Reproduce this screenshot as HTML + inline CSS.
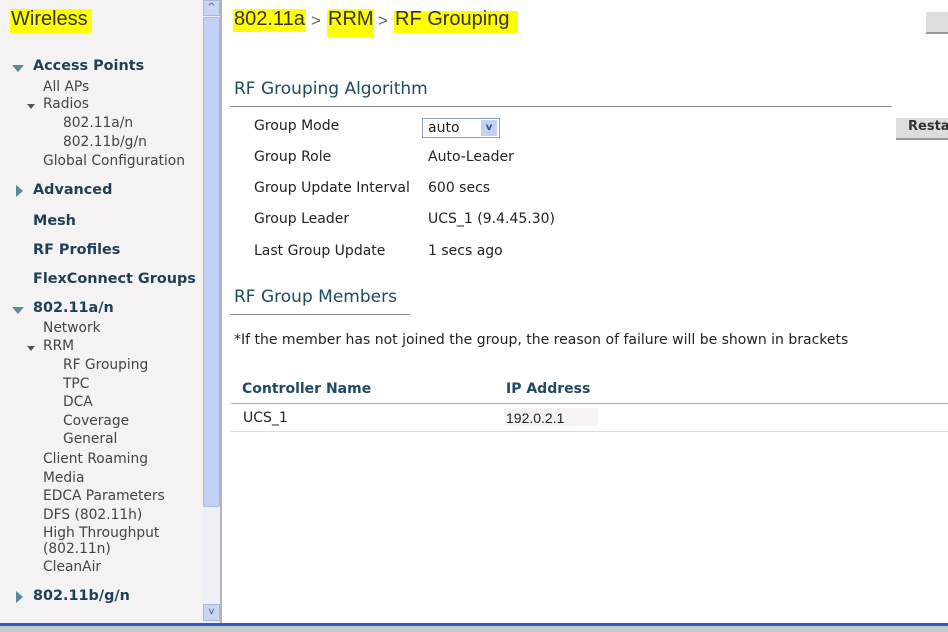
<!DOCTYPE html>
<html><head><style>
body{margin:0;width:948px;height:632px;position:relative;overflow:hidden;background:#fff;font-family:"DejaVu Sans","Liberation Sans",sans-serif;}
.a{position:absolute;white-space:nowrap;}
#side{position:absolute;left:0;top:0;width:203px;height:623px;background:#f4f2f2;}
.h{font-weight:bold;color:#1e3f55;font-size:14.4px;}
.s{color:#444;font-size:13.8px;}
.t{color:#222;font-size:14px;}
.tri{position:absolute;width:0;height:0;}
.sec{color:#1e4a62;font-size:17px;}
.ti{font-family:'Liberation Sans',sans-serif;font-size:20px;color:#333;top:8px;}
</style></head><body>
<div id="side"></div>
<div class="a" style="left:10px;top:9px;background:#ffff00;width:82px;height:24px;"></div>
<div class="a" style="left:11px;top:8px;font-family:'Liberation Sans',sans-serif;font-size:20px;color:#333;">Wireless</div>

<div class="tri" style="left:12px;top:65px;border-left:6px solid transparent;border-right:6px solid transparent;border-top:7px solid #5a8a9a;"></div>
<div class="a h" style="left:33px;top:58px;">Access Points</div>
<div class="a s" style="left:43px;top:79px;">All APs</div>
<div class="tri" style="left:27px;top:104px;border-left:4px solid transparent;border-right:4px solid transparent;border-top:5px solid #555;"></div>
<div class="a s" style="left:43px;top:96px;">Radios</div>
<div class="a s" style="left:63px;top:115px;">802.11a/n</div>
<div class="a s" style="left:63px;top:134px;">802.11b/g/n</div>
<div class="a s" style="left:43px;top:153px;">Global Configuration</div>
<div class="tri" style="left:16px;top:185px;border-top:6px solid transparent;border-bottom:6px solid transparent;border-left:7px solid #5a8a9a;"></div>
<div class="a h" style="left:33px;top:182px;">Advanced</div>
<div class="a h" style="left:33px;top:213px;">Mesh</div>
<div class="a h" style="left:33px;top:242px;">RF Profiles</div>
<div class="a h" style="left:33px;top:271px;">FlexConnect Groups</div>
<div class="tri" style="left:12px;top:307px;border-left:6px solid transparent;border-right:6px solid transparent;border-top:7px solid #5a8a9a;"></div>
<div class="a h" style="left:33px;top:300px;">802.11a/n</div>
<div class="a s" style="left:43px;top:320px;">Network</div>
<div class="tri" style="left:27px;top:346px;border-left:4px solid transparent;border-right:4px solid transparent;border-top:5px solid #555;"></div>
<div class="a s" style="left:43px;top:338px;">RRM</div>
<div class="a s" style="left:63px;top:357px;">RF Grouping</div>
<div class="a s" style="left:63px;top:376px;">TPC</div>
<div class="a s" style="left:63px;top:394px;">DCA</div>
<div class="a s" style="left:63px;top:413px;">Coverage</div>
<div class="a s" style="left:63px;top:431px;">General</div>
<div class="a s" style="left:43px;top:451px;">Client Roaming</div>
<div class="a s" style="left:43px;top:470px;">Media</div>
<div class="a s" style="left:43px;top:488px;">EDCA Parameters</div>
<div class="a s" style="left:43px;top:507px;">DFS (802.11h)</div>
<div class="a s" style="left:43px;top:525px;">High Throughput</div>
<div class="a s" style="left:43px;top:541px;">(802.11n)</div>
<div class="a s" style="left:43px;top:559px;">CleanAir</div>
<div class="tri" style="left:16px;top:591px;border-top:6px solid transparent;border-bottom:6px solid transparent;border-left:7px solid #5a8a9a;"></div>
<div class="a h" style="left:33px;top:588px;">802.11b/g/n</div>

<!-- scrollbar -->
<div class="a" style="left:203px;top:0;width:17px;height:623px;background:#eef0f6;"></div>
<div class="a" style="left:203px;top:0;width:17px;height:16px;background:#c9d6f2;border:1px solid #a8b8dd;box-sizing:border-box;font-size:10px;color:#4b5d8a;text-align:center;line-height:14px;">^</div>
<div class="a" style="left:203px;top:17px;width:17px;height:490px;background:#c3d2f4;border:1px solid #a8b8e0;box-sizing:border-box;border-radius:2px;"></div>
<div class="a" style="left:203px;top:604px;width:17px;height:17px;background:#c9d6f2;border:1px solid #a8b8dd;box-sizing:border-box;font-size:10px;color:#4b5d8a;text-align:center;line-height:14px;">v</div>
<div class="a" style="left:220px;top:0;width:2px;height:623px;background:#aab3be;"></div>

<!-- title -->
<div class="a" style="left:233px;top:9px;width:73px;height:23px;background:#ffff00;"></div>
<div class="a" style="left:327px;top:9px;width:47px;height:28px;background:#ffff00;"></div>
<div class="a" style="left:394px;top:11px;width:124px;height:22px;background:#ffff00;"></div>
<div class="a ti" style="left:234px;">802.11a</div>
<div class="a ti" style="left:311px;color:#666;font-size:17px;top:11px;">&gt;</div>
<div class="a ti" style="left:328px;">RRM</div>
<div class="a ti" style="left:378px;color:#666;font-size:17px;top:11px;">&gt;</div>
<div class="a ti" style="left:395px;">RF Grouping</div>
<div class="a" style="left:926px;top:12px;width:22px;height:20px;background:#ddd;border-bottom:2px solid #999;"></div>

<div class="a sec" style="left:234px;top:79px;">RF Grouping Algorithm</div>
<div class="a" style="left:230px;top:106px;width:662px;height:1px;background:#888;"></div>
<div class="a t" style="left:254px;top:118px;">Group Mode</div>
<div class="a" style="left:422px;top:118px;width:78px;height:20px;border:1px solid #8aa0c0;box-sizing:border-box;background:#fff;"></div>
<div class="a t" style="left:428px;top:120px;">auto</div>
<div class="a" style="left:481px;top:120px;width:16px;height:16px;background:#c3d2f4;color:#2b4f9a;font-size:10px;text-align:center;line-height:16px;font-weight:bold;">v</div>
<div class="a" style="left:896px;top:118px;width:52px;height:20px;background:#ddd;border-bottom:2px solid #999;"></div>
<div class="a t" style="left:908px;top:119px;font-weight:bold;color:#333;font-size:13px;">Resta</div>
<div class="a t" style="left:254px;top:149px;">Group Role</div>
<div class="a t" style="left:428px;top:149px;">Auto-Leader</div>
<div class="a t" style="left:254px;top:180px;">Group Update Interval</div>
<div class="a t" style="left:428px;top:180px;">600 secs</div>
<div class="a t" style="left:254px;top:211px;">Group Leader</div>
<div class="a t" style="left:428px;top:211px;">UCS_1 (9.4.45.30)</div>
<div class="a t" style="left:254px;top:243px;">Last Group Update</div>
<div class="a t" style="left:428px;top:243px;">1 secs ago</div>

<div class="a sec" style="left:234px;top:287px;">RF Group Members</div>
<div class="a" style="left:230px;top:314px;width:180px;height:1px;background:#888;"></div>
<div class="a t" style="left:234px;top:332px;">*If the member has not joined the group, the reason of failure will be shown in brackets</div>
<div class="a" style="left:242px;top:381px;font-size:14px;font-weight:bold;color:#1e4a62;">Controller Name</div>
<div class="a" style="left:506px;top:381px;font-size:14px;font-weight:bold;color:#1e4a62;">IP Address</div>
<div class="a" style="left:231px;top:403px;width:717px;height:1px;background:#aaa;"></div>
<div class="a" style="left:504px;top:408px;width:94px;height:18px;background:#f6f1f3;"></div>
<div class="a t" style="left:243px;top:410px;">UCS_1</div>
<div class="a" style="left:506px;top:410px;font-family:'Liberation Sans',sans-serif;font-size:14px;color:#222;">192.0.2.1</div>
<div class="a" style="left:231px;top:431px;width:717px;height:1px;background:#ddd;"></div>

<div class="a" style="left:0;top:623px;width:948px;height:3px;background:#2a5bc4;"></div>
<div class="a" style="left:0;top:626px;width:948px;height:6px;background:#c8c8c8;"></div>
</body></html>
